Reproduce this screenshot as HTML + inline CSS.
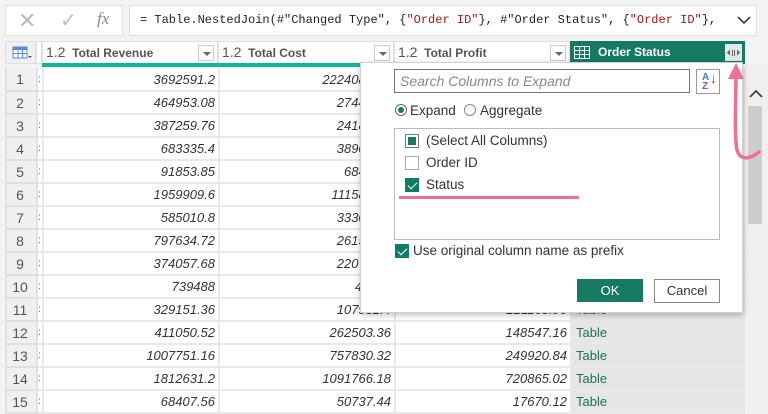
<!DOCTYPE html>
<html><head><meta charset="utf-8"><style>
*{box-sizing:border-box;margin:0;padding:0}
body{width:768px;height:414px;overflow:hidden;background:#f3f3f3;font-family:"Liberation Sans",sans-serif;position:relative;font-size:13px;color:#333}
.abs{position:absolute}
.fbox{background:#fff;border:1px solid #e1e1e1}
.mono{font-family:"Liberation Mono",monospace;font-size:12px;color:#222}
.red{color:#a31515}
table{position:absolute;left:5px;top:68px;border-collapse:collapse;table-layout:fixed}
td{height:23px;border:2px solid #e8e8e8;border-top:0;background:#fff;font-style:italic;text-align:right;padding-right:3px;color:#333;font-size:13px}
td.n{background:#f0f0f0;font-style:normal;text-align:center;color:#555;font-size:14px;border-color:#e0e0e0}
td.p{background:#fff;font-style:normal;text-align:left;padding:0;color:#555;font-size:10px}
td.s{background:#e6e6e6;font-style:normal;text-align:left;color:#1f6f5c;padding-left:4px}
.hdr{top:41px;height:23px;background:#fff;border:1px solid #e0e0e0;font-weight:bold;color:#555;font-size:12px;line-height:21px}
.dd{position:absolute;right:3px;top:3px;width:16px;height:16px;border:1px solid #ccc;background:#fff}
.dd:after{content:"";position:absolute;left:4px;top:6px;border:4px solid transparent;border-top:4px solid #666}
.cb{position:absolute;width:14px;height:14px;border:1px solid #999;background:#fff}
.cbk{background:#107c66;border-color:#107c66}
.cbk:after{content:"";position:absolute;left:4px;top:1px;width:4px;height:8px;border:solid #fff;border-width:0 1.5px 1.5px 0;transform:rotate(45deg)}
.dl{font-size:13.5px}
</style></head><body>
<div class="abs fbox" style="left:5px;top:5px;width:118px;height:31px"></div>
<div class="abs" style="left:18px;top:8px;font-size:22px;color:#bbb">✕</div>
<div class="abs" style="left:60px;top:8px;font-size:20px;color:#bbb">✓</div>
<div class="abs" style="left:97px;top:9px;font-size:17px;color:#888;font-family:'Liberation Serif',serif;font-style:italic">fx</div>
<div class="abs fbox" style="left:129px;top:5px;width:628px;height:31px"></div>
<div class="abs mono" style="left:140px;top:13px;white-space:pre">= Table.NestedJoin(#"Changed Type", {<span class="red">"Order ID"</span>}, #"Order Status", {<span class="red">"Order ID"</span>},</div>
<svg class="abs" style="left:737px;top:16px" width="14" height="9"><path d="M1 1l6 6 6-6" fill="none" stroke="#444" stroke-width="1.8"/></svg>

<div class="abs hdr" style="left:5px;width:31px;background:#f0f0f0"><svg width="20" height="14" style="position:absolute;left:6px;top:4px"><rect x="1" y="1" width="14" height="11" fill="#fff" stroke="#5b8bd0"/><rect x="1" y="1" width="14" height="3" fill="#5b8bd0"/><path d="M1 7.5h14M6 4v8M10.5 4v8" stroke="#5b8bd0"/><path d="M16 10l2 2 2-2z" fill="#555"/></svg></div>
<div class="abs hdr" style="left:36px;width:6px"></div>
<div class="abs hdr" style="left:42px;width:176px;padding-left:3px"><span style="font-size:14px;font-weight:normal">1.2</span>&nbsp; Total Revenue<div class="dd"></div></div>
<div class="abs hdr" style="left:218px;width:176px;padding-left:3px"><span style="font-size:14px;font-weight:normal">1.2</span>&nbsp; Total Cost<div class="dd"></div></div>
<div class="abs hdr" style="left:394px;width:176px;padding-left:3px"><span style="font-size:14px;font-weight:normal">1.2</span>&nbsp; Total Profit<div class="dd"></div></div>
<div class="abs hdr" style="left:570px;width:175px;background:#167a63;color:#fff;padding-left:27px;border-color:#167a63">Order Status
<svg width="16" height="14" style="position:absolute;left:3px;top:4px"><rect x="0.5" y="0.5" width="15" height="12" fill="none" stroke="#fff"/><path d="M0 4.5h16M0 8.5h16M5.5 0v13M10.5 0v13" stroke="#fff"/></svg>
<div style="position:absolute;right:2px;top:2px;width:17px;height:17px;background:#e3e6ea"><svg width="17" height="17"><path d="M2 8.5l3-3v6z M15 8.5l-3-3v6z" fill="#666"/><path d="M7.5 6v6M9.5 6v6" stroke="#666"/></svg></div></div>
<div class="abs" style="left:42px;top:63px;width:528px;height:4px;background:#14b3a0"></div>

<table>
<colgroup><col style="width:31px"><col style="width:6px"><col style="width:176px"><col style="width:176px"><col style="width:176px"><col style="width:175px"></colgroup>
<tr><td class="n">1</td><td class="p">:</td><td>3692591.2</td><td>2224080.24</td><td>1468510.96</td><td class="s">Table</td></tr>
<tr><td class="n">2</td><td class="p">:</td><td>464953.08</td><td>274466.8</td><td>190486.28</td><td class="s">Table</td></tr>
<tr><td class="n">3</td><td class="p">:</td><td>387259.76</td><td>241895.4</td><td>145364.36</td><td class="s">Table</td></tr>
<tr><td class="n">4</td><td class="p">:</td><td>683335.4</td><td>389043.2</td><td>294292.2</td><td class="s">Table</td></tr>
<tr><td class="n">5</td><td class="p">:</td><td>91853.85</td><td>68436.2</td><td>23417.65</td><td class="s">Table</td></tr>
<tr><td class="n">6</td><td class="p">:</td><td>1959909.6</td><td>1115843.6</td><td>844066</td><td class="s">Table</td></tr>
<tr><td class="n">7</td><td class="p">:</td><td>585010.8</td><td>333023.4</td><td>251987.4</td><td class="s">Table</td></tr>
<tr><td class="n">8</td><td class="p">:</td><td>797634.72</td><td>261520.8</td><td>536113.92</td><td class="s">Table</td></tr>
<tr><td class="n">9</td><td class="p">:</td><td>374057.68</td><td>220710.4</td><td>153347.28</td><td class="s">Table</td></tr>
<tr><td class="n">10</td><td class="p">:</td><td>739488</td><td>43512</td><td>695976</td><td class="s">Table</td></tr>
<tr><td class="n">11</td><td class="p">:</td><td>329151.36</td><td>107982.4</td><td>221168.96</td><td class="s">Table</td></tr>
<tr><td class="n">12</td><td class="p">:</td><td>411050.52</td><td>262503.36</td><td>148547.16</td><td class="s">Table</td></tr>
<tr><td class="n">13</td><td class="p">:</td><td>1007751.16</td><td>757830.32</td><td>249920.84</td><td class="s">Table</td></tr>
<tr><td class="n">14</td><td class="p">:</td><td>1812631.2</td><td>1091766.18</td><td>720865.02</td><td class="s">Table</td></tr>
<tr><td class="n">15</td><td class="p">:</td><td>68407.56</td><td>50737.44</td><td>17670.12</td><td class="s">Table</td></tr>
</table>

<div class="abs" style="left:745px;top:64px;width:23px;height:350px;background:#f0f0f0"></div>
<div class="abs" style="left:748px;top:106px;width:14px;height:118px;background:#cdcdcd"></div>
<svg class="abs" style="left:749px;top:89px" width="14" height="9"><path d="M1 8l6-6 6 6" fill="none" stroke="#444" stroke-width="1.8"/></svg>

<div class="abs" style="left:360px;top:62px;width:383px;height:251px;background:#fff;border:1px solid #d0d0d0;box-shadow:0 2px 6px rgba(0,0,0,.25)"></div>
<div class="abs" style="left:394px;top:69px;width:296px;height:24px;border:1px solid #777;background:#fff;font-style:italic;color:#888;font-size:14px;padding:3px 5px">Search Columns to Expand</div>
<div class="abs" style="left:696px;top:69px;width:24px;height:25px;border:1px solid #999;background:#fff;font-size:10px;line-height:9px;padding:3px 0 0 5px;font-weight:bold"><span style="color:#3b7dd8">A</span><br><span style="color:#8a4fc0">Z</span><span style="position:absolute;left:13px;top:4px;font-size:14px;font-weight:normal;color:#555">↓</span></div>
<div class="abs" style="left:395px;top:104px;width:12px;height:12px;border-radius:50%;border:1px solid #666;background:#fff"><div style="margin:2px;width:6px;height:6px;border-radius:50%;background:#167a63"></div></div>
<div class="abs dl" style="left:410px;top:103px">Expand</div>
<div class="abs" style="left:464px;top:104px;width:12px;height:12px;border-radius:50%;border:1px solid #888;background:#fff"></div>
<div class="abs dl" style="left:480px;top:103px">Aggregate</div>
<div class="abs" style="left:394px;top:128px;width:326px;height:112px;border:1px solid #bbb;background:#fff"></div>
<div class="cb" style="left:405px;top:134px;border-color:#777"><div style="margin:2px;width:8px;height:8px;background:#167a63"></div></div>
<div class="abs dl" style="left:426px;top:133px">(Select All Columns)</div>
<div class="cb" style="left:405px;top:156px;border-color:#aaa"></div>
<div class="abs dl" style="left:426px;top:155px">Order ID</div>
<div class="cb cbk" style="left:405px;top:178px"></div>
<div class="abs dl" style="left:426px;top:177px">Status</div>
<div class="abs" style="left:399px;top:196px;width:180px;height:3px;background:#ee6f9c"></div>
<div class="cb cbk" style="left:395px;top:244px"></div>
<div class="abs dl" style="left:413px;top:243px">Use original column name as prefix</div>
<div class="abs" style="left:577px;top:279px;width:66px;height:23px;background:#167a63;color:#fff;text-align:center;line-height:23px;font-size:13px">OK</div>
<div class="abs" style="left:654px;top:279px;width:66px;height:24px;border:1px solid #888;background:#fff;text-align:center;line-height:22px;font-size:13px">Cancel</div>

<svg class="abs" style="left:725px;top:55px" width="40" height="110"><path d="M34 97 C28 102 16 108 12 95 C9 80 11 50 11 15" fill="none" stroke="#ee6f9c" stroke-width="3.5" stroke-linecap="round"/><path d="M3 24 L11 8 L19 24 Z" fill="#ee6f9c"/></svg>
</body></html>
